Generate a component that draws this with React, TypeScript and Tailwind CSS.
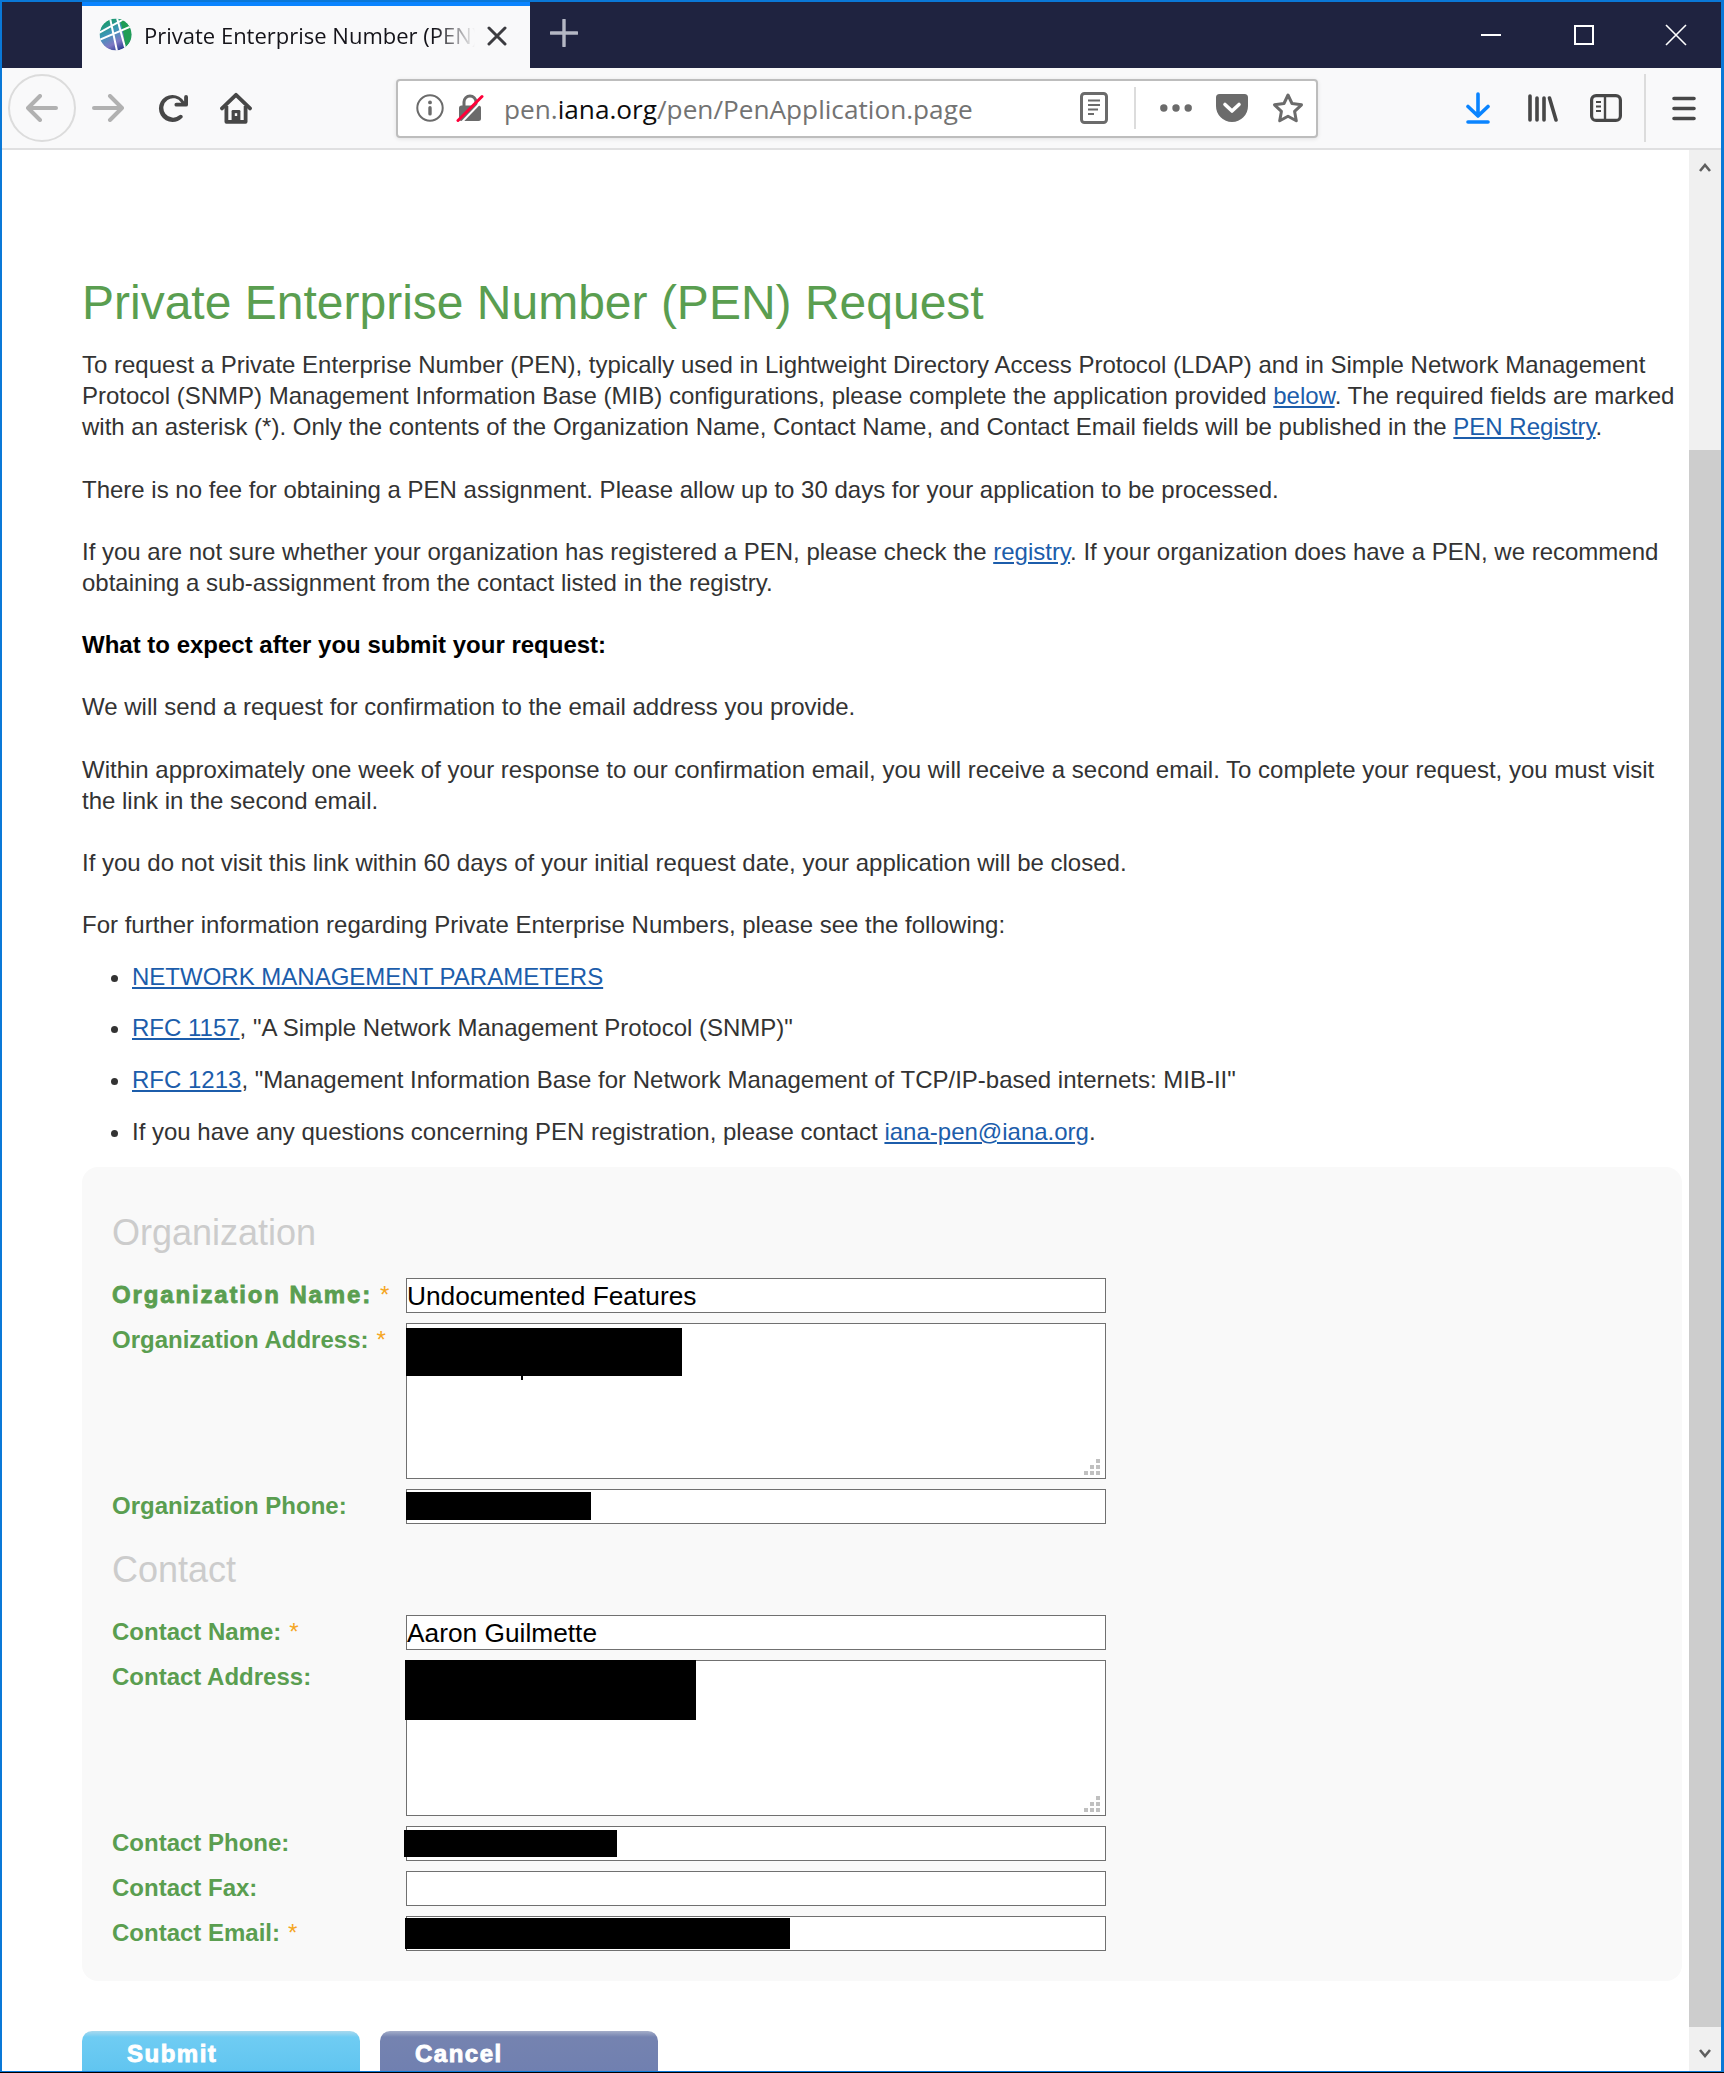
import React from "react";

const GREY = "#6b6b6b";
const DARK = "#474747";

function A({ children }: { children: React.ReactNode }) {
  return <a className="text-[#1c5dab] underline">{children}</a>;
}

function Field({ label, required, heavy, tall, children }: { label: string; required?: boolean; heavy?: boolean; tall?: boolean; children?: React.ReactNode }) {
  return (
    <div className="flex items-start">
      <div className={`w-[294px] shrink-0 leading-[33px] text-[24px] text-[#5a9e50] font-bold whitespace-nowrap ${heavy ? "tracking-[1.85px] [-webkit-text-stroke:0.8px_#5a9e50]" : ""}`}>
        {label}
        {required && <span className="ml-[8px] tracking-normal text-[#f5a623] font-normal [-webkit-text-stroke:0]">*</span>}
      </div>
      <div className={`relative w-[700px] ${tall ? "h-[156px]" : "h-[35px]"} bg-white border border-[#707070] text-[26.3px] leading-[35px] text-black`}>
        {children}
        {tall && (
          <svg width="16" height="16" viewBox="0 0 16 16" fill="#c0c0c0" className="absolute right-[5px] bottom-[3px]">
            <rect x="12" y="0" width="4" height="4" />
            <rect x="6" y="6" width="4" height="4" />
            <rect x="12" y="6" width="4" height="4" />
            <rect x="0" y="12" width="4" height="4" />
            <rect x="6" y="12" width="4" height="4" />
            <rect x="12" y="12" width="4" height="4" />
          </svg>
        )}
      </div>
    </div>
  );
}

function Favicon() {
  return (
    <svg width="33" height="33" viewBox="0 0 33 33" className="shrink-0">
      <defs>
        <linearGradient id="fav" x1="0.1" y1="0.1" x2="0.6" y2="1">
          <stop offset="0" stopColor="#159a62" />
          <stop offset="0.4" stopColor="#3d96b8" />
          <stop offset="0.75" stopColor="#7f78c4" />
          <stop offset="1" stopColor="#2f3f93" />
        </linearGradient>
        <clipPath id="favc"><circle cx="16.5" cy="16.5" r="16" /></clipPath>
      </defs>
      <g clipPath="url(#favc)">
        <circle cx="16.5" cy="16.5" r="16" fill="url(#fav)" />
        <path d="M20 0H33V26L26 33C26 22 24 10 20 0z" fill="#1f9d55" />
        <path d="M11 0L18 33M18 0L27 33M0 15L27 0M0 22L33 8" stroke="#fff" strokeWidth="2" fill="none" />
      </g>
    </svg>
  );
}

function Toolbar() {
  return (
    <div className="flex items-center h-[80px] bg-[#f9f9fa] shrink-0">
      <div className="w-[68px] h-[68px] ml-[6px] shrink-0 rounded-full border-2 border-[#dcdcdc] flex items-center justify-center">
        <svg width="32" height="28" viewBox="0 0 32 28" fill="none" stroke="#b1b1b1" strokeWidth="4" strokeLinecap="round" strokeLinejoin="round"><path d="M2 14H30M14 2L2 14L14 26" /></svg>
      </div>
      <svg width="32" height="28" viewBox="0 0 32 28" fill="none" stroke="#b1b1b1" strokeWidth="4" strokeLinecap="round" strokeLinejoin="round" className="ml-[16px] shrink-0"><path d="M2 14H30M18 2L30 14L18 26" /></svg>
      <svg width="31" height="31" viewBox="0 0 16 16" fill={DARK} className="ml-[33px] shrink-0">
        <path d="M15 1a1 1 0 0 0-1 1v2.418A6.995 6.995 0 1 0 8 15a6.954 6.954 0 0 0 4.95-2.05 1 1 0 0 0-1.414-1.414A5.019 5.019 0 1 1 12.549 5H10a1 1 0 0 0 0 2h5a1 1 0 0 0 1-1V2a1 1 0 0 0-1-1z" />
      </svg>
      <svg width="32" height="32" viewBox="0 0 16 16" className="ml-[32px] shrink-0">
        <path d="M1 8.2L8 1.4L15 8.2" fill="none" stroke={DARK} strokeWidth="1.9" strokeLinecap="round" strokeLinejoin="round" />
        <path d="M3.2 7V14.9H12.8V7" fill="none" stroke={DARK} strokeWidth="1.9" strokeLinejoin="round" />
        <rect x="5.8" y="9" width="4.4" height="6" rx="0.6" fill={DARK} />
        <rect x="7.4" y="10.6" width="1.2" height="1.4" fill="#f9f9fa" />
      </svg>
      <div className="ml-[144px] w-[922px] h-[59px] shrink-0 bg-white border-2 border-[#bdbdbd] rounded-[4px] shadow-[0_1px_4px_rgba(0,0,0,0.1)] flex items-center">
        <svg width="28" height="28" viewBox="0 0 28 28" className="ml-[18px] shrink-0">
          <circle cx="14" cy="14" r="12.7" fill="none" stroke={GREY} strokeWidth="2" />
          <circle cx="14" cy="8.4" r="1.9" fill={GREY} />
          <rect x="12.3" y="12" width="3.4" height="9.6" rx="1.7" fill={GREY} />
        </svg>
        <svg width="28" height="28" viewBox="0 0 28 28" className="ml-[12px] shrink-0">
          <path d="M8 12V8a6 6 0 0 1 12 0v4" fill="none" stroke={GREY} strokeWidth="3" />
          <rect x="3" y="11.5" width="22" height="15.5" rx="2.5" fill={GREY} />
          <path d="M3 28L27 3" stroke="#fff" strokeWidth="2" transform="translate(2 1)" />
          <path d="M2 26.5L26 2.5" stroke="#ff0039" strokeWidth="3" strokeLinecap="round" />
        </svg>
        <span className="ml-[20px] w-[560px] pt-[3px] whitespace-nowrap text-[26.2px] text-[#737373] font-['Open_Sans',sans-serif]">
          pen.<span className="text-[#0c0c0d]">iana.org</span>/pen/PenApplication.page
        </span>
        <svg width="28" height="32" viewBox="0 0 28 32" className="ml-[16px] shrink-0">
          <rect x="1.5" y="1.5" width="25" height="29" rx="3" fill="none" stroke={GREY} strokeWidth="3" />
          <path d="M8 8.5H20M8 13H20M8 17.5H18M8 22H14" stroke={GREY} strokeWidth="2.2" />
        </svg>
        <div className="ml-[26px] w-[2px] h-[42px] bg-[#dcdcdc] shrink-0" />
        <svg width="32" height="8" viewBox="0 0 32 8" fill={GREY} className="ml-[24px] shrink-0">
          <circle cx="3.8" cy="4" r="3.7" /><circle cx="16" cy="4" r="3.7" /><circle cx="28.2" cy="4" r="3.7" />
        </svg>
        <svg width="32" height="28" viewBox="0 0 32 28" className="ml-[24px] shrink-0">
          <path d="M3.5 0H28.5A3.5 3.5 0 0 1 32 3.5V12A16 16 0 0 1 0 12V3.5A3.5 3.5 0 0 1 3.5 0z" fill={GREY} />
          <path d="M9 10.5L16 17L23 10.5" fill="none" stroke="#fff" strokeWidth="3.6" strokeLinecap="round" strokeLinejoin="round" />
        </svg>
        <svg width="32" height="32" viewBox="0 0 32 32" className="ml-[24px] shrink-0">
          <path d="M16 3L20 11.5L29.5 12.8L22.6 19.4L24.3 28.8L16 24.3L7.7 28.8L9.4 19.4L2.5 12.8L12 11.5z" fill="none" stroke={GREY} strokeWidth="3" strokeLinejoin="round" />
        </svg>
      </div>
      <svg width="24" height="32" viewBox="0 0 24 32" className="ml-[148px] shrink-0" fill="none" stroke="#0a84ff" strokeWidth="3.6" strokeLinecap="round" strokeLinejoin="round">
        <path d="M12 2V24M2 14.5L12 24L22 14.5" />
        <path d="M2 30H22" />
      </svg>
      <svg width="30" height="28" viewBox="0 0 30 28" className="ml-[38px] shrink-0" fill="none" stroke={DARK} strokeWidth="3.6" strokeLinecap="round">
        <path d="M2 2V26M9 4V26M16 4V26M21.5 4L28 26" />
      </svg>
      <svg width="32" height="28" viewBox="0 0 32 28" className="ml-[32px] shrink-0" fill="none" stroke={DARK}>
        <rect x="1.6" y="1.6" width="28.8" height="24.8" rx="4.5" strokeWidth="3.2" />
        <path d="M15 2V26" strokeWidth="2.4" />
        <path d="M6 8H11M6 12.5H11M6 17H11" strokeWidth="2.2" />
      </svg>
      <div className="ml-[22px] w-[2px] h-[68px] bg-[#dcdcdc] shrink-0" />
      <svg width="24" height="25" viewBox="0 0 24 25" className="ml-[26px] shrink-0" fill="none" stroke={DARK} strokeWidth="3.6" strokeLinecap="round">
        <path d="M2 2.5H22M2 12.5H22M2 22.5H22" />
      </svg>
    </div>
  );
}

function TitleBar() {
  return (
    <div className="flex h-[66px] bg-[#1f2340] shrink-0">
      <div className="w-[80px]" />
      <div className="w-[448px] bg-[#f9f9fa] border-t-4 border-[#0a84ff] flex items-center pl-[17px] relative">
        <div className="-mt-[6px]"><Favicon /></div>
        <span className="ml-[12px] w-[331px] overflow-hidden whitespace-nowrap text-[22px] text-[#15141a] font-['Open_Sans',sans-serif] -mt-1 [mask-image:linear-gradient(to_right,black_88%,transparent)]">
          Private Enterprise Number (PEN) Request
        </span>
        <svg width="20" height="20" viewBox="0 0 20 20" className="absolute left-[405px] top-[20px]" stroke="#3c3c40" strokeWidth="3" strokeLinecap="round"><path d="M2 2L18 18M18 2L2 18" /></svg>
      </div>
      <div className="flex items-center ml-[20px]">
        <svg width="28" height="28" viewBox="0 0 28 28" stroke="#b4b7c4" strokeWidth="3.4" strokeLinecap="round" className="-mt-[4px]"><path d="M14 1V27M1 14H27" /></svg>
      </div>
      <div className="ml-auto flex items-center pr-[34px]">
        <div className="w-[20px] h-[2px] bg-white" />
        <div className="ml-[73px] w-[20px] h-[20px] border-2 border-white" />
        <svg width="22" height="22" viewBox="0 0 22 22" stroke="#fff" strokeWidth="1.6" className="ml-[71px]"><path d="M1 1L21 21M21 1L1 21" /></svg>
      </div>
    </div>
  );
}

function Scrollbar() {
  return (
    <div className="w-[32px] shrink-0 bg-[#f0f0f0] flex flex-col">
      <div className="h-[300px] pt-[13px] flex justify-center">
        <svg width="12" height="9" viewBox="0 0 12 9" fill="none" stroke="#5f5f5f" strokeWidth="2.6"><path d="M1 8L6 2L11 8" /></svg>
      </div>
      <div className="flex-1 bg-[#cdcdcd]" />
      <div className="h-[44px] pt-[22px] flex justify-center">
        <svg width="12" height="9" viewBox="0 0 12 9" fill="none" stroke="#5f5f5f" strokeWidth="2.6"><path d="M1 1L6 7L11 1" /></svg>
      </div>
    </div>
  );
}

export default function App() {
  return (
    <div className="h-[2073px] overflow-hidden border-b border-black">
      <div className="h-full flex flex-col border-t-2 border-l-2 border-r-[3px] border-b border-[#0a78d7] bg-white font-['Liberation_Sans',Arial,sans-serif]">
        <TitleBar />
        <Toolbar />
        <div className="h-[2px] bg-[#e0e0e1] shrink-0" />
        <div className="flex-1 flex min-h-0">
          <div className="flex-1 overflow-hidden pl-[80px] text-[24px] leading-[31.2px] text-[#333]">
            <div className="w-[1600px]">
              <h1 className="mt-[123px] mb-[16px] text-[48px] leading-[60px] text-[#5a9e50]">Private Enterprise Number (PEN) Request</h1>
              <p>To request a Private Enterprise Number (PEN), typically used in Lightweight Directory Access Protocol (LDAP) and in Simple Network Management Protocol (SNMP) Management Information Base (MIB) configurations, please complete the application provided <A>below</A>. The required fields are marked with an asterisk (*). Only the contents of the Organization Name, Contact Name, and Contact Email fields will be published in the <A>PEN Registry</A>.</p>
              <p className="mt-[31px]">There is no fee for obtaining a PEN assignment. Please allow up to 30 days for your application to be processed.</p>
              <p className="mt-[31px]">If you are not sure whether your organization has registered a PEN, please check the <A>registry</A>. If your organization does have a PEN, we recommend obtaining a sub-assignment from the contact listed in the registry.</p>
              <p className="mt-[31px] font-bold text-black">What to expect after you submit your request:</p>
              <p className="mt-[31px]">We will send a request for confirmation to the email address you provide.</p>
              <p className="mt-[31px]">Within approximately one week of your response to our confirmation email, you will receive a second email. To complete your request, you must visit the link in the second email.</p>
              <p className="mt-[31px]">If you do not visit this link within 60 days of your initial request date, your application will be closed.</p>
              <p className="mt-[31px]">For further information regarding Private Enterprise Numbers, please see the following:</p>
              <ul className="list-disc pl-[50px]">
                <li className="mt-[20.4px]"><A>NETWORK MANAGEMENT PARAMETERS</A></li>
                <li className="mt-[20.4px]"><A>RFC 1157</A>, "A Simple Network Management Protocol (SNMP)"</li>
                <li className="mt-[20.4px]"><A>RFC 1213</A>, "Management Information Base for Network Management of TCP/IP-based internets: MIB-II"</li>
                <li className="mt-[20.4px]">If you have any questions concerning PEN registration, please contact <A>iana-pen@iana.org</A>.</li>
              </ul>

              <div className="mt-[20px] bg-[#f9f9f9] rounded-[16px] pt-[44px] pb-[30px] pl-[30px]">
                <h2 className="text-[36px] leading-[44px] text-[#cccccc] mb-[23px]">Organization</h2>
                <div className="flex flex-col gap-[10px]">
                  <Field label="Organization Name:" required heavy>Undocumented Features</Field>
                  <Field label="Organization Address:" required tall>
                    <div className="absolute -left-[1px] top-[4px] w-[276px] h-[48px] bg-black" />
                    <div className="absolute left-[114px] top-[52px] w-[2px] h-[4px] bg-black" />
                  </Field>
                  <Field label="Organization Phone:">
                    <div className="absolute -left-[1px] top-[2px] w-[185px] h-[28px] bg-black" />
                  </Field>
                </div>
                <h2 className="mt-[24px] text-[36px] leading-[44px] text-[#cccccc] mb-[23px]">Contact</h2>
                <div className="flex flex-col gap-[10px]">
                  <Field label="Contact Name:" required>Aaron Guilmette</Field>
                  <Field label="Contact Address:" tall>
                    <div className="absolute -left-[2px] -top-[1px] w-[291px] h-[60px] bg-black" />
                  </Field>
                  <Field label="Contact Phone:">
                    <div className="absolute -left-[3px] top-[3px] w-[213px] h-[27px] bg-black" />
                  </Field>
                  <Field label="Contact Fax:" />
                  <Field label="Contact Email:" required>
                    <div className="absolute -left-[2px] top-[1px] w-[385px] h-[31px] bg-black" />
                  </Field>
                </div>
              </div>

              <div className="mt-[50px] flex gap-[20px]">
                <button className="w-[278px] h-[50px] rounded-t-[10px] pl-[45px] pb-[5px] text-left text-white font-bold text-[24px] tracking-[1.5px] [-webkit-text-stroke:0.9px_#fff] bg-gradient-to-b from-[#a9d9ee] via-[#6fccf3] via-[12%] to-[#5cc3ef]">Submit</button>
                <button className="w-[278px] h-[50px] rounded-t-[10px] pl-[35px] pb-[5px] text-left text-white font-bold text-[24px] tracking-[1.5px] [-webkit-text-stroke:0.9px_#fff] bg-gradient-to-b from-[#a5aec9] via-[#7583b0] via-[12%] to-[#6f7fb0]">Cancel</button>
              </div>
            </div>
          </div>
          <Scrollbar />
        </div>
      </div>
    </div>
  );
}
